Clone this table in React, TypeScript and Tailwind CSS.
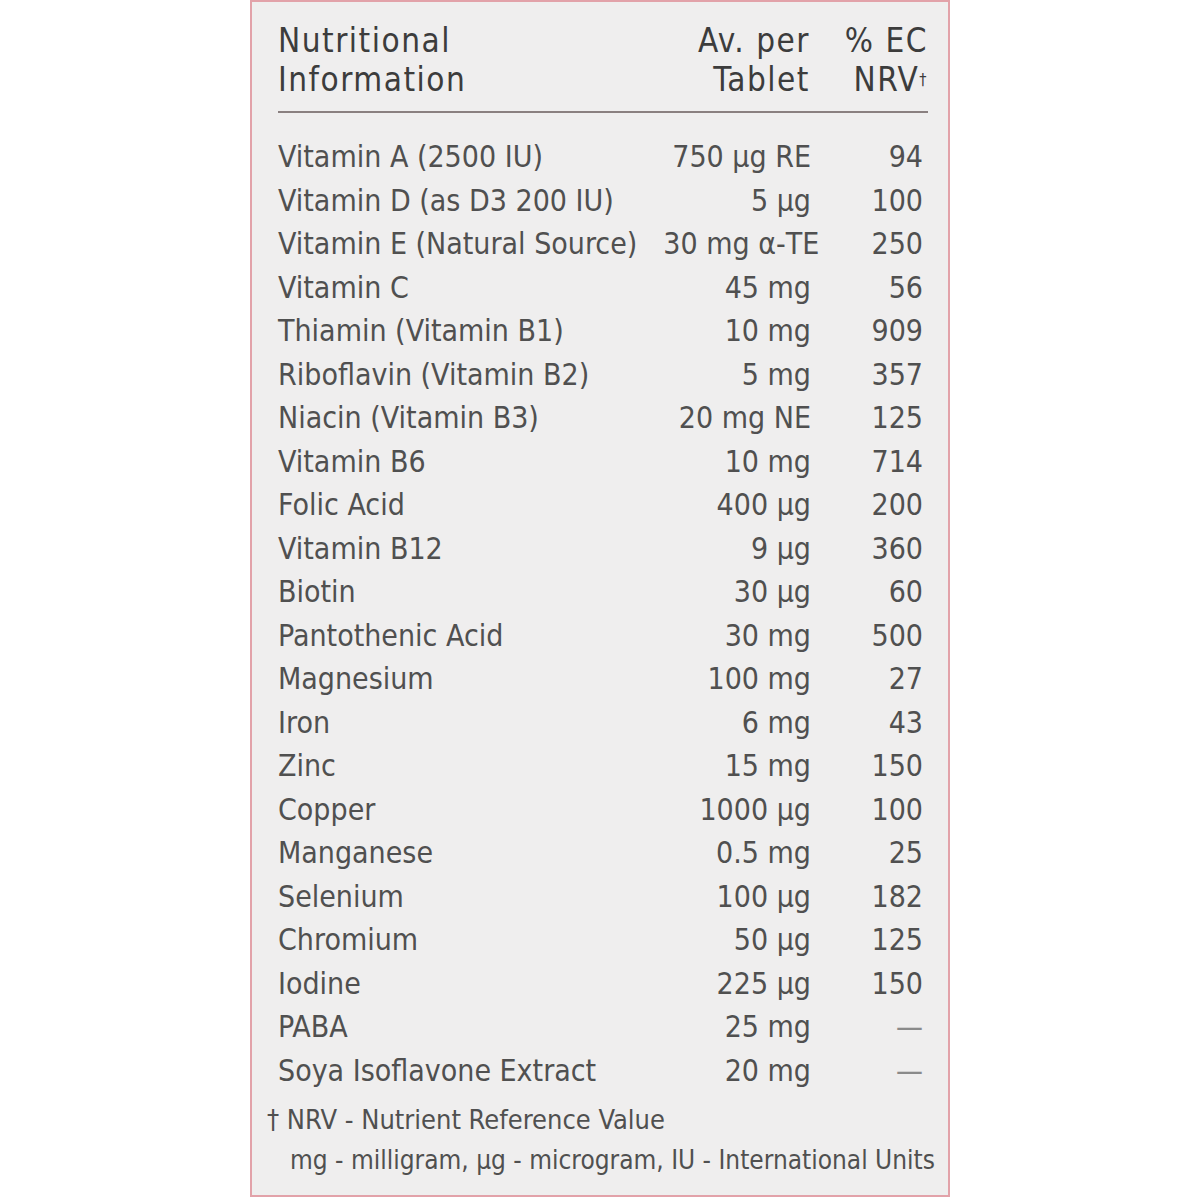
const rows: [string, string, string][] = [
  ["Vitamin A (2500 IU)", "750 µg RE", "94"],
  ["Vitamin D (as D3 200 IU)", "5 µg", "100"],
  ["Vitamin E (Natural Source)", "30 mg α-TE", "250"],
  ["Vitamin C", "45 mg", "56"],
  ["Thiamin (Vitamin B1)", "10 mg", "909"],
  ["Riboflavin (Vitamin B2)", "5 mg", "357"],
  ["Niacin (Vitamin B3)", "20 mg NE", "125"],
  ["Vitamin B6", "10 mg", "714"],
  ["Folic Acid", "400 µg", "200"],
  ["Vitamin B12", "9 µg", "360"],
  ["Biotin", "30 µg", "60"],
  ["Pantothenic Acid", "30 mg", "500"],
  ["Magnesium", "100 mg", "27"],
  ["Iron", "6 mg", "43"],
  ["Zinc", "15 mg", "150"],
  ["Copper", "1000 µg", "100"],
  ["Manganese", "0.5 mg", "25"],
  ["Selenium", "100 µg", "182"],
  ["Chromium", "50 µg", "125"],
  ["Iodine", "225 µg", "150"],
  ["PABA", "25 mg", "—"],
  ["Soya Isoflavone Extract", "20 mg", "—"],
];

export default function App() {
  return (
    <div className="w-[1200px] h-[1200px] bg-white">
      <div
        className="ml-[250px] w-[700px] h-[1197px] bg-[#efeeee] border-2 border-[#e2a2a9] text-[#505050]"
        style={{ fontFamily: '"DejaVu Sans Condensed", "Open Sans", sans-serif' }}
      >
        <div className="ml-[26px] w-[650px]">
          <div className="flex pt-[19px] pb-[12px] border-b-2 border-[#8a8080] text-[#3c3c3c] text-[33px] leading-[39px] tracking-[1.5px]">
            <div className="flex-1">
              Nutritional
              <br />
              Information
            </div>
            <div className="w-[200px] text-right">
              Av. per
              <br />
              Tablet
            </div>
            <div className="w-[118px] text-right whitespace-nowrap">
              % EC
              <br />
              NRV<span className="text-[16px] align-top">†</span>
            </div>
          </div>
          <div className="pt-[22px] text-[30px] leading-[43.5px]">
            {rows.map((r, i) => (
              <div key={i} className="flex">
                <div className="flex-1 whitespace-nowrap">{r[0]}</div>
                <div className="w-[200px] pr-[3px] text-right whitespace-nowrap">{r[1]}</div>
                <div className="w-[114px] pr-[5px] text-right">
                  {r[2] === "—" ? <span className="text-[#8a8a8a]">—</span> : r[2]}
                </div>
              </div>
            ))}
          </div>
        </div>
        <div className="mt-[8px] ml-[15px] leading-[40px] whitespace-nowrap">
          <div className="text-[27px]">† NRV - Nutrient Reference Value</div>
          <div className="pl-[23px] text-[26px]">mg - milligram, µg - microgram, IU - International Units</div>
        </div>
      </div>
    </div>
  );
}
